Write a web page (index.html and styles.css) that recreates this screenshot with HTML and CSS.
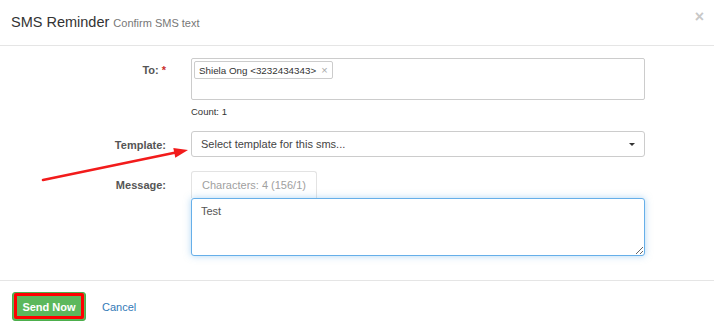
FILE: index.html
```html
<!DOCTYPE html>
<html>
<head>
<meta charset="utf-8">
<link rel="stylesheet" href="styles.css">
</head>
<body>
<div class="modal">
  <header class="modal-header">
    <h4 class="modal-title">SMS Reminder <small>Confirm SMS text</small></h4>
    <button class="close" type="button">×</button>
  </header>
  <div class="modal-body">
    <div class="form-row">
      <label class="label label-to">To: <span class="req">*</span></label>
      <div class="field">
        <div class="tagbox"><span class="tag">Shiela Ong &lt;3232434343&gt; <span class="tag-x">×</span></span></div>
        <div class="help">Count: 1</div>
      </div>
    </div>
    <div class="form-row row-template">
      <label class="label">Template:</label>
      <div class="field">
        <div class="select"><span>Select template for this sms...</span><span class="caret"></span></div>
      </div>
    </div>
    <div class="form-row row-message">
      <label class="label">Message:</label>
      <div class="field">
        <div class="tab">Characters: 4 (156/1)</div>
        <textarea class="textarea">Test</textarea>
      </div>
    </div>
  </div>
  <footer class="modal-footer">
    <button class="btn-send" type="button">Send Now<span class="highlight"></span></button>
    <a class="btn-cancel" href="#">Cancel</a>
  </footer>
  <svg class="arrow" width="714" height="333" viewBox="0 0 714 333">
    <line x1="43" y1="180" x2="177" y2="152.3" stroke="#f21b1b" stroke-width="2.6" stroke-linecap="round"/>
    <polygon points="188,150 175.3,157.7 173.3,147.9" fill="#f21b1b"/>
  </svg>
</div>
</body>
</html>
```
FILE: styles.css
```css
* { box-sizing: border-box; }
html, body { margin: 0; padding: 0; background: #fff; }
body {
  font-family: "Liberation Sans", Arial, sans-serif;
  font-size: 11px;
  color: #333;
}
.modal { position: relative; width: 714px; height: 333px; overflow: hidden; }

.modal-header {
  height: 46px;
  border-bottom: 1px solid #e5e5e5;
  display: flex;
  align-items: flex-start;
  padding: 0 10px 0 11px;
}
.modal-title {
  flex: 1;
  margin: 0;
  padding-top: 14px;
  font-size: 14.5px;
  font-weight: normal;
  line-height: 17px;
  color: #333;
}
.modal-title small { font-size: 11px; color: #777; }
.close {
  margin-top: 9px;
  padding: 0;
  border: 0;
  background: none;
  font-family: "Liberation Sans", Arial, sans-serif;
  font-size: 16px;
  font-weight: bold;
  line-height: 16px;
  color: #c8c8c8;
}

.modal-body { padding: 12px 0 24px 0; }
.form-row {
  display: grid;
  grid-template-columns: 166px 454px;
  column-gap: 25px;
}
.label {
  text-align: right;
  font-weight: bold;
  color: #555;
  line-height: 14px;
  padding-top: 7px;
}
.label-to { padding-top: 5px; }
.req { color: #c9302c; }
.row-template { margin-top: 13px; }
.row-message { margin-top: 14px; }

.tagbox {
  height: 42px;
  border: 1px solid #ccc;
  border-radius: 2px;
  padding: 2px 2px;
}
.tag {
  display: inline-flex;
  align-items: center;
  height: 18px;
  border: 1px solid #ccc;
  border-radius: 2px;
  padding: 0 4px;
  font-size: 9.8px;
  color: #333;
  gap: 5px;
}
.tag-x { color: #aaa; font-size: 11px; }
.help {
  margin-top: 6px;
  font-size: 9.5px;
  line-height: 12px;
  color: #333;
}

.select {
  height: 26px;
  border: 1px solid #ccc;
  border-radius: 3px;
  display: flex;
  align-items: center;
  justify-content: space-between;
  padding: 0 9px 0 9px;
  color: #444;
}
.caret {
  width: 0; height: 0;
  border-left: 3px solid transparent;
  border-right: 3px solid transparent;
  border-top: 3px solid #333;
}

.tab {
  width: 126px;
  height: 27px;
  border: 1px solid #e3e3e3;
  border-bottom: 0;
  border-radius: 3px 3px 0 0;
  padding: 0 10px;
  line-height: 27px;
  color: #a0a0a0;
}
.textarea {
  display: block;
  width: 454px;
  height: 58px;
  margin: 0;
  border: 1px solid #66afe9;
  border-radius: 3px;
  box-shadow: 0 0 7px rgba(102, 175, 233, 0.5);
  outline: none;
  padding: 5px 9px;
  font-family: "Liberation Sans", Arial, sans-serif;
  font-size: 11px;
  line-height: 14px;
  color: #555;
  resize: vertical;
}

.modal-footer {
  border-top: 1px solid #e5e5e5;
  padding: 11px 0 0 12px;
  display: flex;
  align-items: center;
}
.btn-send {
  position: relative;
  width: 74px;
  height: 29px;
  border: 1px solid #4cae4c;
  border-radius: 3px;
  background: #5cb85c;
  color: #fff;
  font-family: "Liberation Sans", Arial, sans-serif;
  font-size: 11px;
  font-weight: bold;
  padding: 0;
}
.highlight {
  position: absolute;
  left: 1px; top: 0; right: 1px; bottom: 1px;
  border: 3px solid #f00;
  border-radius: 2px;
}
.btn-cancel {
  margin-left: 16px;
  color: #337ab7;
  text-decoration: none;
  font-size: 11px;
}

.arrow { position: absolute; left: 0; top: 0; pointer-events: none; }
```
